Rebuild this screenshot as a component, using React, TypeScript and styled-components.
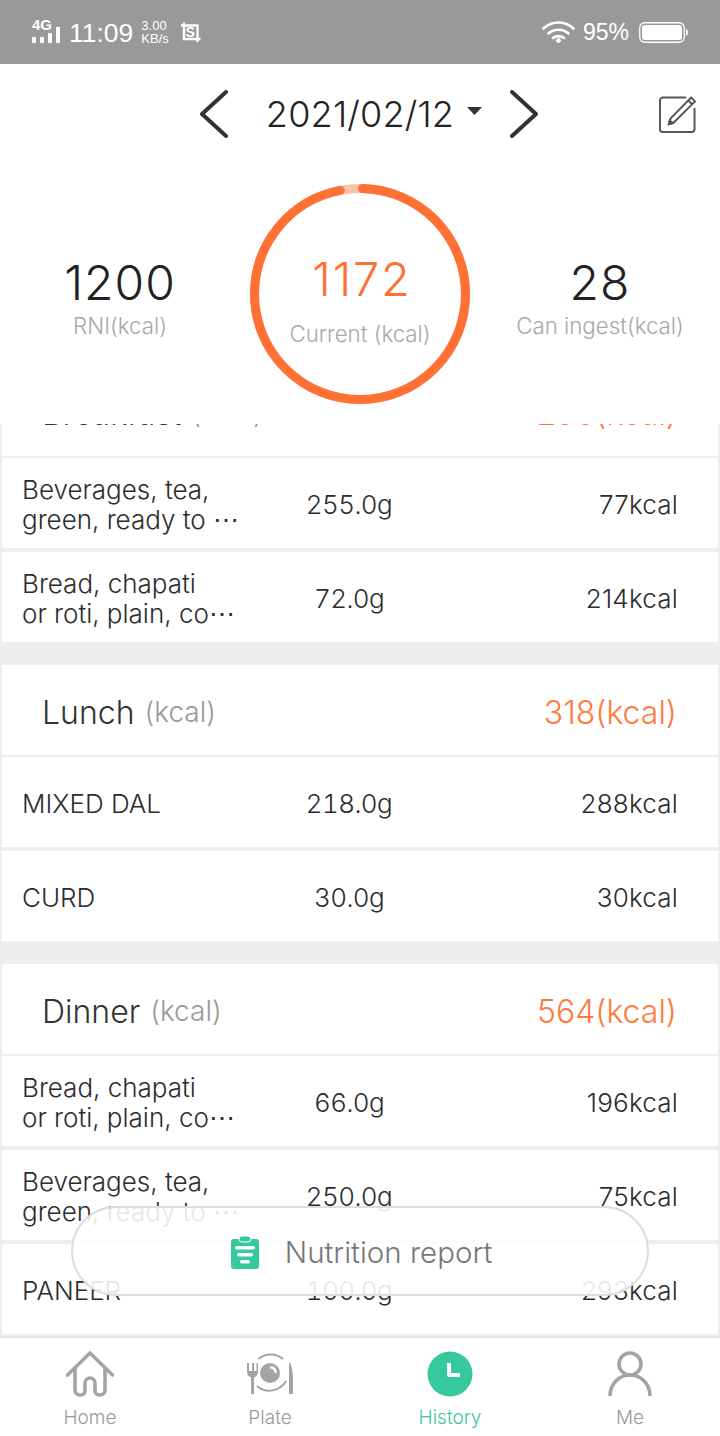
import React from "react";
import styled, { createGlobalStyle } from "styled-components";

const Global = createGlobalStyle`
  html, body { margin: 0; padding: 0; background: #fff; }
  body { font-family: Inter, "Noto Sans", "Liberation Sans", sans-serif; }
  * { box-sizing: border-box; }
`;

const Page = styled.div`
  position: relative;
  width: 720px;
  height: 1436px;
  display: flex;
  flex-direction: column;
  overflow: hidden;
  background: #fff;
  color: #333;
`;

const StatusBar = styled.div`
  height: 64px;
  flex: none;
  background: #999;
  color: #fff;
  display: flex;
  align-items: center;
  justify-content: space-between;
  padding: 0 32px;
`;
const StatusGroup = styled.div`
  display: flex;
  align-items: center;
`;
const Time = styled.span`
  font-family: "Liberation Sans", Arial, sans-serif;
  font-size: 26.5px;
  margin-left: 9px;
  line-height: 1;
  margin-top: 2px;
`;
const Speed = styled.span`
  display: flex;
  flex-direction: column;
  font-family: "Liberation Sans", Arial, sans-serif;
  font-size: 13px;
  line-height: 13px;
  margin-left: 8px;
  width: 29px;
`;
const Percent = styled.span`
  font-family: "Liberation Sans", Arial, sans-serif;
  font-size: 23px;
  margin: 0 10px 0 8px;
`;

const Summary = styled.div`
  height: 360px;
  flex: none;
  display: flex;
  flex-direction: column;
`;
const DateRow = styled.div`
  height: 100px;
  flex: none;
  display: grid;
  grid-template-columns: 1fr auto 1fr;
  align-items: center;
  padding: 0 24px 0 42px;
`;
const DateNav = styled.div`
  display: flex;
  align-items: center;
  grid-column: 2;
`;
const DateLabel = styled.span`
  font-size: 36px;
  font-weight: 300;
  letter-spacing: 0.2px;
  color: #222;
  margin: 0 13px 0 37px;
`;
const EditSlot = styled.div`
  grid-column: 3;
  justify-self: end;
  display: flex;
`;
const Stats = styled.div`
  display: grid;
  grid-template-columns: repeat(3, 240px);
  margin-top: 20px;
  height: 220px;
`;
const Stat = styled.div`
  display: flex;
  flex-direction: column;
  align-items: center;
  padding-top: 71px;
`;
const StatValue = styled.div`
  font-size: 48px;
  line-height: 56px;
  font-weight: 300;
  letter-spacing: 1px;
  color: #222;
`;
const StatLabel = styled.div`
  font-size: 22.3px;
  line-height: 30px;
  font-weight: 300;
  color: #a8a8a8;
`;
const RingWrap = styled.div`
  position: relative;
  width: 220px;
  height: 220px;
  justify-self: center;
`;
const RingText = styled.div`
  position: absolute;
  inset: 0;
  display: flex;
  flex-direction: column;
  align-items: center;
  padding-top: 67px;
`;
const RingValue = styled.div`
  font-size: 47px;
  line-height: 56px;
  letter-spacing: 1.8px;
  padding-left: 4px;
  color: #ff7034;
  font-weight: 300;
`;
const RingLabel = styled.div`
  font-size: 22.3px;
  line-height: 30px;
  margin-top: 12px;
  font-weight: 300;
  color: #a8a8a8;
`;

const List = styled.div`
  flex: 1;
  min-height: 0;
  overflow: hidden;
  background: #eee;
  padding: 0 2px;
`;
const ListScroll = styled.div`
  margin-top: -58px;
`;
const Section = styled.section`
  margin-bottom: 23px;
`;
const Header = styled.div`
  height: 90px;
  margin-bottom: 2px;
  background: #fff;
  display: flex;
  align-items: center;
  padding: 4px 41px 0 40px;
`;
const MealName = styled.span`
  font-size: 32px;
  color: #333;
  font-weight: 300;
`;
const MealUnit = styled.span`
  font-size: 28px;
  color: #999;
  margin-left: 10px;
  font-weight: 300;
`;
const MealTotal = styled.span`
  font-size: 32px;
  color: #ff7a3d;
  margin-left: auto;
  font-weight: 300;
`;
const Row = styled.div`
  height: 90px;
  margin-bottom: 4px;
  background: #fff;
  display: grid;
  grid-template-columns: 250px 154px 1fr;
  align-items: center;
  padding: 0 40px 0 20px;
  font-size: 26px;
  color: #2c2c2c;
  font-weight: 300;
  &:last-child { margin-bottom: 0; }
`;
const FoodName = styled.div`
  line-height: 30px;
  white-space: pre-line;
  padding-top: 4px;
`;
const Weight = styled.div`
  text-align: center;
  padding-top: 2px;
  font-variant-numeric: tabular-nums;
  letter-spacing: -0.6px;
`;
const Kcal = styled.div`
  text-align: right;
  padding-top: 2px;
  letter-spacing: 0.2px;
`;

const ReportButton = styled.div`
  position: absolute;
  left: 71px;
  top: 1206px;
  width: 578px;
  height: 90px;
  border: 2px solid #ddd;
  border-radius: 45px;
  background: rgba(255, 255, 255, 0.88);
  display: flex;
  align-items: center;
  justify-content: center;
  gap: 26px;
  padding: 2px 0 0 3px;
  color: #777;
  font-size: 29.5px;
  font-weight: 300;
`;

const TabBar = styled.nav`
  height: 100px;
  flex: none;
  border-top: 2px solid #e6e6e6;
  background: #fff;
  display: grid;
  grid-template-columns: repeat(4, 180px);
`;
const Tab = styled.div<{ $active?: boolean }>`
  display: flex;
  flex-direction: column;
  align-items: center;
  padding-top: 13px;
  font-size: 19px;
  line-height: 24px;
  font-weight: 300;
  color: ${(p) => (p.$active ? "#35c99d" : "#999")};
`;
const TabIcon = styled.div`
  height: 46px;
  margin-bottom: 9px;
  display: flex;
  align-items: center;
  justify-content: center;
`;

const Signal = () => (
  <svg width="28" height="24" viewBox="0 0 28 24" overflow="visible">
    <text x="0" y="10" fontFamily="Liberation Sans" fontWeight="700" fontSize="15" fill="#fff">4G</text>
    <rect x="0" y="17" width="4" height="6" fill="#fff" />
    <rect x="8" y="17" width="4" height="6" fill="#fff" />
    <rect x="16" y="13" width="4" height="10" fill="#fff" />
    <rect x="24" y="7" width="4" height="16" fill="#fff" />
  </svg>
);
const CropS = () => (
  <svg width="21" height="21" viewBox="0 0 21 21" style={{ marginLeft: 10 }}>
    <path d="M1 3.500h16.500V20M4 0.500V17h16.500" fill="none" stroke="#fff" strokeWidth="2.400" />
    <text x="5.500" y="15" fontFamily="Liberation Sans" fontWeight="700" fontSize="14" fill="#fff">S</text>
  </svg>
);
const Wifi = () => (
  <svg width="33" height="24" viewBox="0 0 33 24" fill="none" stroke="#fff" strokeWidth="2.600" strokeLinecap="round">
    <path d="M1.500 8.500C10 0.500 23 0.500 31.500 8.500" />
    <path d="M6.500 13.500C12 8.500 21 8.500 26.500 13.500" />
    <path d="M11 18C14 15.500 19 15.500 22 18" />
    <path d="M13.500 20.500L16.500 17.500L19.500 20.500L16.500 23.500Z" fill="#fff" stroke="none" />
  </svg>
);
const Battery = () => (
  <svg width="49" height="21" viewBox="0 0 49 21">
    <rect x="0.750" y="0.750" width="44.500" height="19.500" rx="5" fill="none" stroke="#fff" strokeWidth="1.300" />
    <rect x="3" y="3" width="40" height="15" rx="3" fill="#fff" />
    <path d="M47 7c1.200.4 2 1.600 2 3.500s-.8 3.100-2 3.500z" fill="#fff" />
  </svg>
);
const Chevron = ({ right }: { right?: boolean }) => (
  <svg width="30" height="48" viewBox="0 0 30 48" fill="none" stroke="#333" strokeWidth="4" strokeLinecap="round" strokeLinejoin="round">
    <path d={right ? "M3 2L27 24L3 46" : "M27 2L3 24L27 46"} />
  </svg>
);
const Caret = () => (
  <svg width="15" height="8" viewBox="0 0 15 8" style={{ marginRight: 27, marginTop: -6 }}>
    <path d="M0 0h15L7.500 8z" fill="#333" />
  </svg>
);
const EditIcon = () => (
  <svg width="37" height="37" viewBox="0 0 38 38" fill="none" stroke="#555" strokeWidth="2">
    <path d="M27 1.500H4a3 3 0 0 0-3 3V34a3 3 0 0 0 3 3h29.500a3 3 0 0 0 3-3V13" strokeLinecap="round" />
    <path d="M33 1.500L37 5.500L15.500 27L10 29L12 23Z" strokeLinejoin="round" />
    <path d="M30 4.500L34 8.500" />
    <path d="M10 29L11 25L14 28Z" fill="#555" />
  </svg>
);
const Clipboard = () => (
  <svg width="28" height="33" viewBox="0 0 28 33">
    <rect x="0" y="3" width="28" height="30" rx="3" fill="#35c99d" />
    <rect x="8" y="0" width="12" height="6" rx="3" fill="#35c99d" stroke="#fff" strokeWidth="1" />
    <rect x="4" y="10" width="20" height="3.500" rx="1.750" fill="#fff" />
    <rect x="6" y="17" width="16" height="3.500" rx="1.750" fill="#fff" />
    <rect x="9" y="24" width="10" height="3.500" rx="1.750" fill="#fff" />
  </svg>
);
const HomeIcon = () => (
  <svg width="48" height="46" viewBox="0 0 48 46" fill="none" stroke="#a4a4a4" strokeWidth="3.600" strokeLinecap="round" strokeLinejoin="round">
    <path d="M1.500 24L24 2L46.500 24" />
    <path d="M9 18.500V39a5 5 0 0 0 5 5h1a4 4 0 0 0 4-4V32a5 5 0 0 1 10 0v8a4 4 0 0 0 4 4h1a5 5 0 0 0 5-5V18.500" />
  </svg>
);
const PlateIcon = () => (
  <svg width="46" height="42" viewBox="0 0 46 42" fill="none">
    <path d="M11.500 6A19 19 0 0 1 36 6M39 28A19 19 0 0 1 10 33" stroke="#a4a4a4" strokeWidth="2" />
    <circle cx="23" cy="20" r="10" fill="#a4a4a4" />
    <path d="M24 14.500a5 5 0 0 1 4.500 4.500" stroke="#fff" strokeWidth="2.500" strokeLinecap="round" />
    <path d="M0 10v9c0 3 2 4.500 4 5.500V41h3V24.500c2-1 4-2.500 4-5.500v-9h-1.500v8H7v-8H5v8H2v-8z" fill="#a4a4a4" />
    <path d="M42 9c3 3 4 10 4 18v14h-4z" fill="#a4a4a4" />
  </svg>
);
const ClockIcon = () => (
  <svg width="46" height="46" viewBox="0 0 46 46">
    <circle cx="23" cy="23" r="22.500" fill="#35c99d" />
    <path d="M22 12V24H33" fill="none" stroke="#fff" strokeWidth="4" strokeLinejoin="round" />
  </svg>
);
const UserIcon = () => (
  <svg width="44" height="46" viewBox="0 0 44 46" fill="none" stroke="#a4a4a4" strokeWidth="3.600">
    <circle cx="22" cy="13" r="11" />
    <path d="M2 45C2 33 11 24 22 24S42 33 42 45" />
  </svg>
);

const Ring = () => {
  const r = 105.5;
  const c = 2 * Math.PI * r;
  const lead = 2.5;
  return (
    <svg width="220" height="220" viewBox="0 0 220 220" fill="none">
      <circle cx="110" cy="110" r={r} stroke="#fcc2a6" strokeWidth="9" />
      <circle
        cx="110"
        cy="110"
        r={r}
        stroke="#ff7034"
        strokeWidth="9"
        strokeLinecap="round"
        strokeDasharray={`${c * 0.969 - lead} ${c}`}
        strokeDashoffset={-lead}
        transform="rotate(-90 110 110)"
      />
    </svg>
  );
};

type Food = { name: string; weight: string; kcal: string };
const meals: { name: string; total: string; foods: Food[] }[] = [
  {
    name: "Breakfast",
    total: "290(kcal)",
    foods: [
      { name: "Beverages, tea,\ngreen, ready to ⋯", weight: "255.0g", kcal: "77kcal" },
      { name: "Bread, chapati\nor roti, plain, co⋯", weight: "72.0g", kcal: "214kcal" },
    ],
  },
  {
    name: "Lunch",
    total: "318(kcal)",
    foods: [
      { name: "MIXED DAL", weight: "218.0g", kcal: "288kcal" },
      { name: "CURD", weight: "30.0g", kcal: "30kcal" },
    ],
  },
  {
    name: "Dinner",
    total: "564(kcal)",
    foods: [
      { name: "Bread, chapati\nor roti, plain, co⋯", weight: "66.0g", kcal: "196kcal" },
      { name: "Beverages, tea,\ngreen, ready to ⋯", weight: "250.0g", kcal: "75kcal" },
      { name: "PANEER", weight: "100.0g", kcal: "293kcal" },
    ],
  },
];

export default function App() {
  return (
    <Page>
      <Global />
      <StatusBar>
        <StatusGroup>
          <Signal />
          <Time>11:09</Time>
          <Speed>
            <span>3.00</span>
            <span>KB/s</span>
          </Speed>
          <CropS />
        </StatusGroup>
        <StatusGroup>
          <Wifi />
          <Percent>95%</Percent>
          <Battery />
        </StatusGroup>
      </StatusBar>

      <Summary>
        <DateRow>
          <DateNav>
            <Chevron />
            <DateLabel>2021/02/12</DateLabel>
            <Caret />
            <Chevron right />
          </DateNav>
          <EditSlot>
            <EditIcon />
          </EditSlot>
        </DateRow>
        <Stats>
          <Stat>
            <StatValue>1200</StatValue>
            <StatLabel>RNI(kcal)</StatLabel>
          </Stat>
          <RingWrap>
            <Ring />
            <RingText>
              <RingValue>1172</RingValue>
              <RingLabel>Current (kcal)</RingLabel>
            </RingText>
          </RingWrap>
          <Stat>
            <StatValue>28</StatValue>
            <StatLabel>Can ingest(kcal)</StatLabel>
          </Stat>
        </Stats>
      </Summary>

      <List>
        <ListScroll>
          {meals.map((m) => (
            <Section key={m.name}>
              <Header>
                <MealName>{m.name}</MealName>
                <MealUnit>(kcal)</MealUnit>
                <MealTotal>{m.total}</MealTotal>
              </Header>
              {m.foods.map((f) => (
                <Row key={f.name}>
                  <FoodName>{f.name}</FoodName>
                  <Weight>{f.weight}</Weight>
                  <Kcal>{f.kcal}</Kcal>
                </Row>
              ))}
            </Section>
          ))}
        </ListScroll>
      </List>

      <ReportButton>
        <Clipboard />
        <span>Nutrition report</span>
      </ReportButton>

      <TabBar>
        <Tab>
          <TabIcon><HomeIcon /></TabIcon>
          Home
        </Tab>
        <Tab>
          <TabIcon><PlateIcon /></TabIcon>
          Plate
        </Tab>
        <Tab $active>
          <TabIcon><ClockIcon /></TabIcon>
          History
        </Tab>
        <Tab>
          <TabIcon><UserIcon /></TabIcon>
          Me
        </Tab>
      </TabBar>
    </Page>
  );
}
